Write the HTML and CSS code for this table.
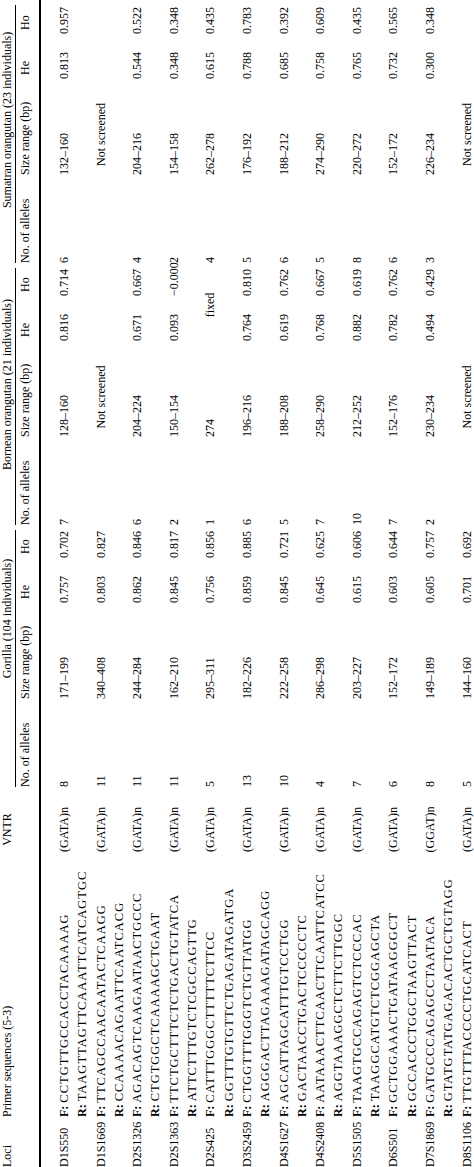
FILE: index.html
```html
<!DOCTYPE html>
<html lang="en">
<head>
<meta charset="utf-8">
<title>Microsatellite loci</title>
<link rel="stylesheet" href="styles.css">
</head>
<body>
<div class="page">
<div class="sheet">
<table class="t">
<colgroup>
<col class="c-loci"><col class="c-primer"><col class="c-vntr">
<col class="c-no"><col class="c-size"><col class="c-he"><col class="c-ho">
<col class="c-no"><col class="c-size"><col class="c-he"><col class="c-ho">
<col class="c-no"><col class="c-size"><col class="c-he"><col class="c-ho last">
</colgroup>
<thead>
<tr class="h1">
<th rowspan="2" class="hl">Loci</th>
<th rowspan="2" class="hl">Primer sequences (5-3)</th>
<th rowspan="2" class="hl hv">VNTR</th>
<th colspan="4" class="grp"><div class="gi gi-g">Gorilla (104 individuals)</div></th>
<th colspan="4" class="grp"><div class="gi gi-b">Bornean orangutan (21 individuals)</div></th>
<th colspan="4" class="grp"><div class="gi gi-s">Sumatran orangutan (23 individuals)</div></th>
</tr>
<tr class="h2">
<th>No. of alleles</th><th>Size range (bp)</th><th class="hh">He</th><th class="hh">Ho</th>
<th>No. of alleles</th><th>Size range (bp)</th><th class="hh">He</th><th class="hh">Ho</th>
<th>No. of alleles</th><th>Size range (bp)</th><th class="hh">He</th><th class="hh">Ho</th>
</tr>
</thead>
<tbody>
<tr class="first">
<td>D1S550</td>
<td><div><b>F:</b> <span class="seq">CCTGTTGCCACCTACAAAAG</span></div><div><b>R:</b> <span class="seq">TAAGTTAGTTCAAATTCATCAGTGC</span></div></td>
<td class="v">(GATA)n</td>
<td>8</td><td>171–199</td><td class="n">0.757</td><td class="n">0.702</td>
<td>7</td><td>128–160</td><td class="n">0.816</td><td class="n">0.714</td>
<td>6</td><td>132–160</td><td class="n">0.813</td><td class="n">0.957</td>
</tr>
<tr>
<td>D1S1669</td>
<td><div><b>F:</b> <span class="seq">TTCAGCCAACAATACTCAAGG</span></div><div><b>R:</b> <span class="seq">CCAAAACAGAATTCAATCACG</span></div></td>
<td class="v">(GATA)n</td>
<td>11</td><td>340–408</td><td class="n">0.803</td><td class="n">0.827</td>
<td colspan="4" class="ns">Not screened</td>
<td colspan="4" class="ns">Not screened</td>
</tr>
<tr>
<td>D2S1326</td>
<td><div><b>F:</b> <span class="seq">AGACAGTCAAGAATAACTGCCC</span></div><div><b>R:</b> <span class="seq">CTGTGGCTCAAAAGCTGAAT</span></div></td>
<td class="v">(GATA)n</td>
<td>11</td><td>244–284</td><td class="n">0.862</td><td class="n">0.846</td>
<td>6</td><td>204–224</td><td class="n">0.671</td><td class="n">0.667</td>
<td>4</td><td>204–216</td><td class="n">0.544</td><td class="n">0.522</td>
</tr>
<tr>
<td>D2S1363</td>
<td><div><b>F:</b> <span class="seq">TTCTGCTTTCTCTGACTGTATCA</span></div><div><b>R:</b> <span class="seq">ATTCTTTGTCTCGCCAGTTG</span></div></td>
<td class="v">(GATA)n</td>
<td>11</td><td>162–210</td><td class="n">0.845</td><td class="n">0.817</td>
<td>2</td><td>150–154</td><td class="n">0.093</td><td class="n">−0.000</td>
<td>2</td><td>154–158</td><td class="n">0.348</td><td class="n">0.348</td>
</tr>
<tr>
<td>D2S425</td>
<td><div><b>F:</b> <span class="seq">CATTTGGGCTTTTTCTTCC</span></div><div><b>R:</b> <span class="seq">GGTTTGTGTTCTGAGATAGATGA</span></div></td>
<td class="v">(GATA)n</td>
<td>5</td><td>295–311</td><td class="n">0.756</td><td class="n">0.856</td>
<td>1</td><td>274</td><td colspan="2" class="fx">fixed</td>
<td>4</td><td>262–278</td><td class="n">0.615</td><td class="n">0.435</td>
</tr>
<tr>
<td>D3S2459</td>
<td><div><b>F:</b> <span class="seq">CTGGTTTGGGTCTGTTATGG</span></div><div><b>R:</b> <span class="seq">AGGGACTTAGAAAGATAGCAGG</span></div></td>
<td class="v">(GATA)n</td>
<td>13</td><td>182–226</td><td class="n">0.859</td><td class="n">0.885</td>
<td>6</td><td>196–216</td><td class="n">0.764</td><td class="n">0.810</td>
<td>5</td><td>176–192</td><td class="n">0.788</td><td class="n">0.783</td>
</tr>
<tr>
<td>D4S1627</td>
<td><div><b>F:</b> <span class="seq">AGCATTAGCATTTGTCCTGG</span></div><div><b>R:</b> <span class="seq">GACTAACCTGACTCCCCCTC</span></div></td>
<td class="v">(GATA)n</td>
<td>10</td><td>222–258</td><td class="n">0.845</td><td class="n">0.721</td>
<td>5</td><td>188–208</td><td class="n">0.619</td><td class="n">0.762</td>
<td>6</td><td>188–212</td><td class="n">0.685</td><td class="n">0.392</td>
</tr>
<tr>
<td>D4S2408</td>
<td><div><b>F:</b> <span class="seq">AATAAACTTCAACTTCAATTCATCC</span></div><div><b>R:</b> <span class="seq">AGGTAAAGGCTCTTCTTGGC</span></div></td>
<td class="v">(GATA)n</td>
<td>4</td><td>286–298</td><td class="n">0.645</td><td class="n">0.625</td>
<td>7</td><td>258–290</td><td class="n">0.768</td><td class="n">0.667</td>
<td>5</td><td>274–290</td><td class="n">0.758</td><td class="n">0.609</td>
</tr>
<tr>
<td>D5S1505</td>
<td><div><b>F:</b> <span class="seq">TAAGTGCCAGAGTCTCCCAC</span></div><div><b>R:</b> <span class="seq">TAAGGCATGTCTCGGAGCTA</span></div></td>
<td class="v">(GATA)n</td>
<td>7</td><td>203–227</td><td class="n">0.615</td><td class="n">0.606</td>
<td>10</td><td>212–252</td><td class="n">0.882</td><td class="n">0.619</td>
<td>8</td><td>220–272</td><td class="n">0.765</td><td class="n">0.435</td>
</tr>
<tr>
<td>D6S501</td>
<td><div><b>F:</b> <span class="seq">GCTGGAAACTGATAAGGGCT</span></div><div><b>R:</b> <span class="seq">GCCACCCTGGCTAAGTTACT</span></div></td>
<td class="v">(GATA)n</td>
<td>6</td><td>152–172</td><td class="n">0.603</td><td class="n">0.644</td>
<td>7</td><td>152–176</td><td class="n">0.782</td><td class="n">0.762</td>
<td>6</td><td>152–172</td><td class="n">0.732</td><td class="n">0.565</td>
</tr>
<tr>
<td>D7S1869</td>
<td><div><b>F:</b> <span class="seq">GATGCCCAGAGCCTAATACA</span></div><div><b>R:</b> <span class="seq">GTATGTATGAGACACTGCTGTAGG</span></div></td>
<td class="v">(GGAT)n</td>
<td>8</td><td>149–189</td><td class="n">0.605</td><td class="n">0.757</td>
<td>2</td><td>230–234</td><td class="n">0.494</td><td class="n">0.429</td>
<td>3</td><td>226–234</td><td class="n">0.300</td><td class="n">0.348</td>
</tr>
<tr>
<td>D8S1106</td>
<td><div><b>F:</b> <span class="seq">TTGTTTACCCCTGCATCACT</span></div></td>
<td class="v">(GATA)n</td>
<td>5</td><td>144–160</td><td class="n">0.701</td><td class="n">0.692</td>
<td colspan="4" class="ns">Not screened</td>
<td colspan="4" class="ns">Not screened</td>
</tr>
</tbody>
</table>
</div>
</div>
</body>
</html>
```
FILE: styles.css
```css
html, body {
  margin: 0;
  padding: 0;
  background: #ffffff;
}

.page {
  width: 474px;
  height: 1167px;
  overflow: hidden;
  background: #ffffff;
}

.sheet {
  width: 1167px;
  height: 474px;
  transform-origin: 0 0;
  transform: translateY(1167px) rotate(-90deg);
}

.t {
  width: 1167px;
  table-layout: fixed;
  border-collapse: separate;
  border-spacing: 0;
  font-family: "Liberation Serif", "Times New Roman", serif;
  font-size: 12px;
  line-height: 18.3px;
  color: #000000;
}

.c-loci { width: 50px; }
.c-primer { width: 264px; }
.c-vntr { width: 66px; }
.c-no { width: 88px; }
.c-size { width: 96px; }
.c-he { width: 45px; }
.c-ho { width: 33px; }
.c-ho.last { width: 34px; }

.t th {
  font-weight: normal;
  text-align: left;
  vertical-align: top;
  padding: 0;
  white-space: nowrap;
}

.h1 th {
  height: 16px;
  line-height: 15px;
}

.h1 th.hl {
  border-bottom: 2px solid #000000;
}

.h1 th.hv {
  text-align: center;
  padding-right: 19px;
}

.gi {
  height: 15px;
  line-height: 15px;
  border-bottom: 1px solid #000000;
  margin-right: 5px;
  text-align: center;
}

.gi-g { padding-left: 80px; }
.gi-b { padding-left: 24px; }
.gi-s { padding-left: 28px; }

.h2 th {
  line-height: 16px;
  padding-top: 1px;
  padding-bottom: 6px;
  border-bottom: 2px solid #000000;
}

.h2 th.hh {
  padding-left: 4px;
}

.t td {
  padding: 0;
  vertical-align: top;
  white-space: nowrap;
  text-align: left;
}

.t tr.first td {
  padding-top: 14px;
}

.t td b {
  font-weight: bold;
}

.seq {
  font-size: 12.5px;
  letter-spacing: 1px;
}

.t td.v {
  text-align: center;
  padding-right: 19px;
}

.t td.ns {
  text-align: center;
  padding-right: 6px;
}

.t td.fx {
  text-align: center;
  padding-right: 6px;
}
```
